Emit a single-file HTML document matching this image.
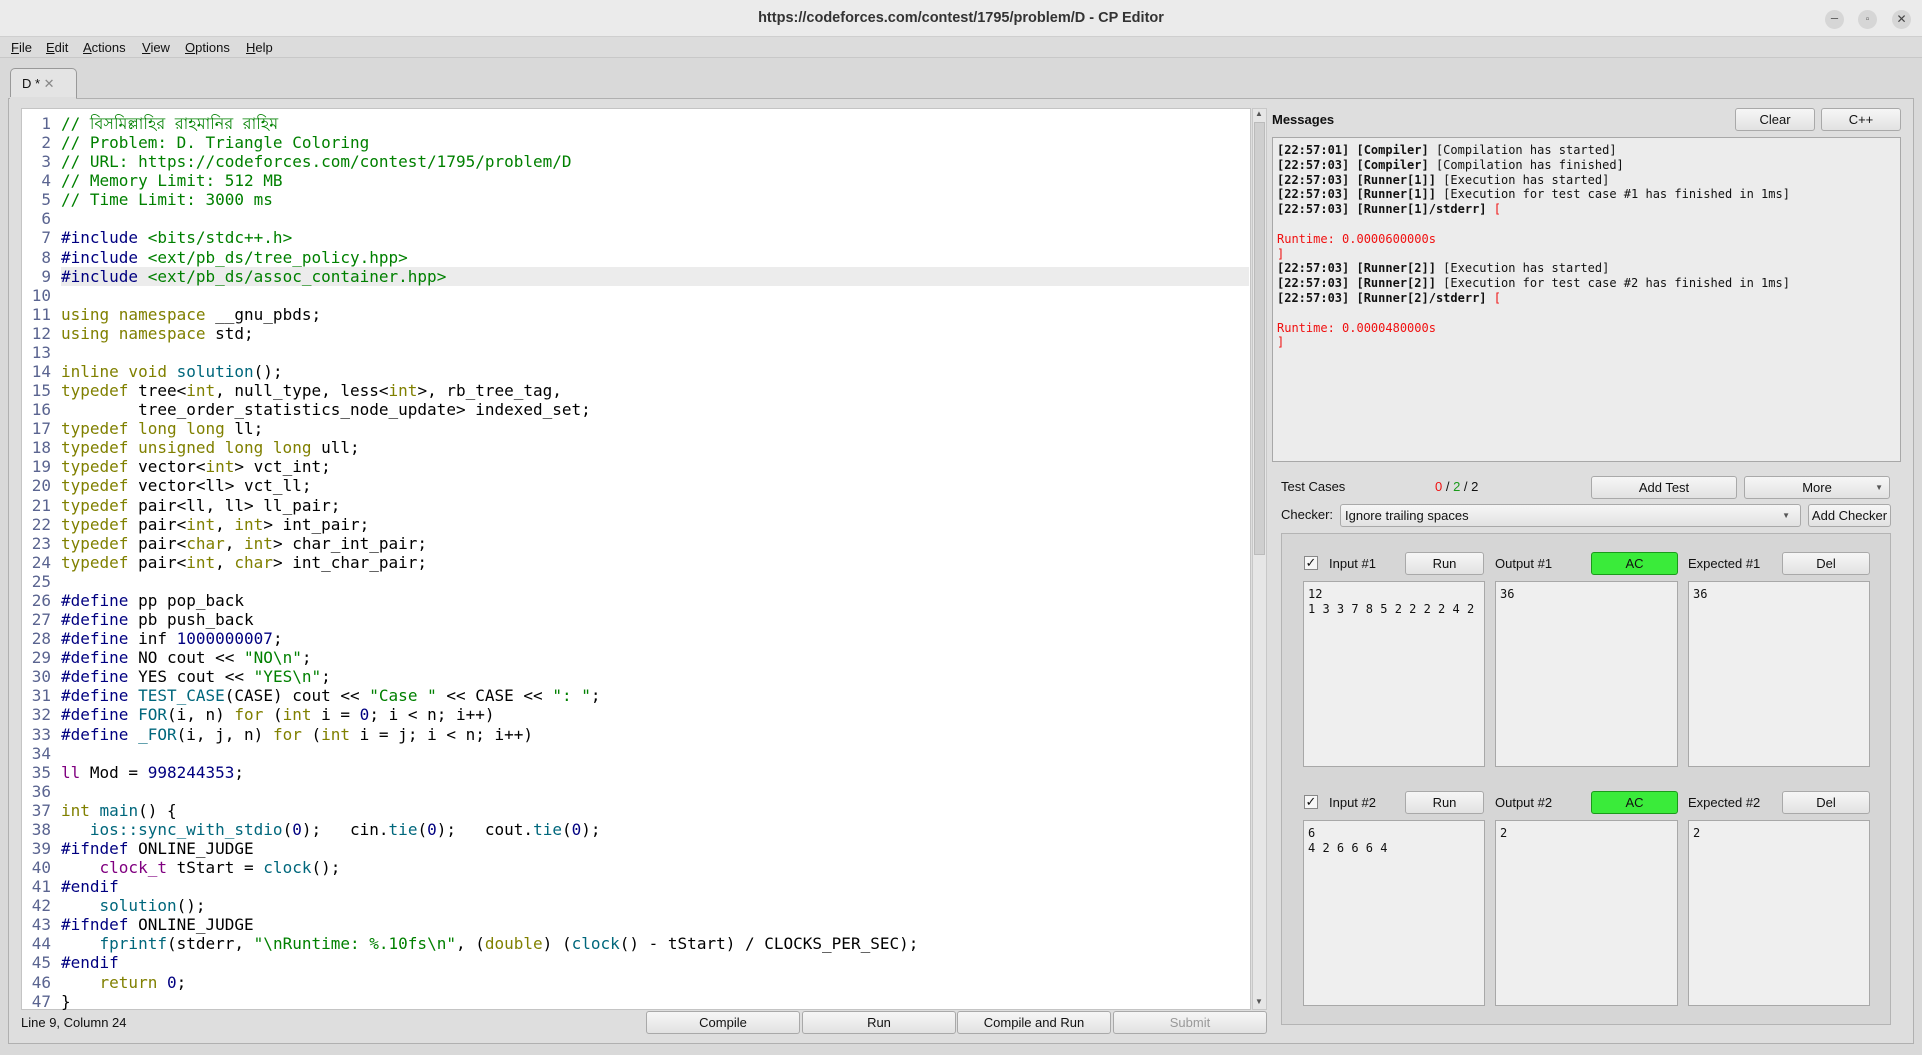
<!DOCTYPE html>
<html><head><meta charset="utf-8"><style>
*{box-sizing:border-box;margin:0;padding:0}
body{width:1922px;height:1055px;overflow:hidden;background:#d9d9d9;font-family:"Liberation Sans","DejaVu Sans",sans-serif;font-size:13px;color:#111;position:relative}
.a{position:absolute}
.btn{position:absolute;border:1px solid #a9a9a9;border-radius:3px;background:linear-gradient(#f6f6f6,#e2e2e2);text-align:center;font-size:13px;color:#111}
.code{font-family:"DejaVu Sans Mono","Liberation Mono",monospace;font-size:16px;line-height:19.08px;white-space:pre;color:#000}
.ln{color:#5a6490;text-align:right;width:30px;position:absolute;left:21px}
.c{color:#008000}.p{color:#000080}.s{color:#008000}.k{color:#808000}.f{color:#00677c}.n{color:#000080}.m{color:#800080}
.msg{font-family:"DejaVu Sans Mono","Liberation Mono",monospace;font-size:12px;line-height:14.8px;white-space:pre;color:#111}
.msg b{font-weight:bold}.r{color:#f01010}
.box{position:absolute;background:#efefef;border:1px solid #a8a8a8;font-family:"DejaVu Sans Mono",monospace;font-size:12px;line-height:15px;padding:5px 4px;white-space:pre}
.ac{position:absolute;border:1px solid #1a9a1a;border-radius:3px;background:#3aeb3a;text-align:center}
.cb{position:absolute;width:14px;height:14px;border:1px solid #888;background:#f7f7f7;font-size:13px;line-height:12px;text-align:center;font-weight:bold}
</style></head><body>
<div class="a" style="left:0;top:0;width:1922px;height:37px;background:#ebebeb;border-bottom:1px solid #cfcfcf"></div>
<div class="a" style="left:0;top:10px;width:1922px;text-align:center;font-weight:bold;font-size:14.5px;color:#333">https://codeforces.com/contest/1795/problem/D - CP Editor</div>
<div class="a" style="left:1825px;top:10px;width:19px;height:19px;border-radius:50%;background:#d6d6d6;text-align:center;line-height:15px;color:#555">–</div>
<div class="a" style="left:1858px;top:10px;width:19px;height:19px;border-radius:50%;background:#d6d6d6;text-align:center;line-height:19px;font-size:10px;color:#555">▫</div>
<div class="a" style="left:1892px;top:10px;width:19px;height:19px;border-radius:50%;background:#d6d6d6;text-align:center;line-height:19px;font-size:12px;color:#444">✕</div>
<div class="a" style="left:0;top:37px;width:1922px;height:21px;background:#dcdcdc;border-bottom:1px solid #c8c8c8"></div>
<div class="a" style="left:11px;top:40px"><u>F</u>ile</div>
<div class="a" style="left:46px;top:40px"><u>E</u>dit</div>
<div class="a" style="left:83px;top:40px"><u>A</u>ctions</div>
<div class="a" style="left:142px;top:40px"><u>V</u>iew</div>
<div class="a" style="left:185px;top:40px"><u>O</u>ptions</div>
<div class="a" style="left:246px;top:40px"><u>H</u>elp</div>
<div class="a" style="left:10px;top:68px;width:67px;height:31px;background:#e4e4e4;border:1px solid #999;border-bottom:none;border-radius:5px 5px 0 0"></div>
<div class="a" style="left:22px;top:76px">D * <span style="color:#888;font-weight:bold">✕</span></div>
<div class="a" style="left:8px;top:98px;width:1906px;height:946px;border:1px solid #b0b0b0;background:#dedede"></div>
<div class="a" style="left:10px;top:97px;width:66px;height:3px;background:#dedede"></div>
<div class="a" style="left:21px;top:108px;width:1230px;height:902px;background:#fff;border:1px solid #c4c4c4"></div>
<div class="a" style="left:61px;top:267px;width:1188px;height:19px;background:#ececec"></div>
<div class="a" style="left:1252px;top:108px;width:15px;height:902px;background:#e6e6e6;border:1px solid #c8c8c8"></div>
<div class="a" style="left:1254px;top:122px;width:11px;height:433px;background:#cfcfcf;border:1px solid #bbb"></div>
<div class="a" style="left:1255px;top:109px;font-size:8px;color:#555">▲</div>
<div class="a" style="left:1255px;top:997px;font-size:8px;color:#555">▼</div>
<div class="a code ln" style="top:114px">1
2
3
4
5
6
7
8
9
10
11
12
13
14
15
16
17
18
19
20
21
22
23
24
25
26
27
28
29
30
31
32
33
34
35
36
37
38
39
40
41
42
43
44
45
46
47</div>
<div class="a code" style="left:61px;top:114px"><span class="c">// বিসমিল্লাহির রাহমানির রাহিম</span>
<span class="c">// Problem: D. Triangle Coloring</span>
<span class="c">// URL: https://codeforces.com/contest/1795/problem/D</span>
<span class="c">// Memory Limit: 512 MB</span>
<span class="c">// Time Limit: 3000 ms</span>

<span class="p">#include</span> <span class="s">&lt;bits/stdc++.h&gt;</span>
<span class="p">#include</span> <span class="s">&lt;ext/pb_ds/tree_policy.hpp&gt;</span>
<span class="p">#include</span> <span class="s">&lt;ext/pb_ds/assoc_container.hpp&gt;</span>

<span class="k">using namespace</span> __gnu_pbds;
<span class="k">using namespace</span> std;

<span class="k">inline void</span> <span class="f">solution</span>();
<span class="k">typedef</span> tree&lt;<span class="k">int</span>, null_type, less&lt;<span class="k">int</span>&gt;, rb_tree_tag,
        tree_order_statistics_node_update&gt; indexed_set;
<span class="k">typedef long long</span> ll;
<span class="k">typedef unsigned long long</span> ull;
<span class="k">typedef</span> vector&lt;<span class="k">int</span>&gt; vct_int;
<span class="k">typedef</span> vector&lt;ll&gt; vct_ll;
<span class="k">typedef</span> pair&lt;ll, ll&gt; ll_pair;
<span class="k">typedef</span> pair&lt;<span class="k">int</span>, <span class="k">int</span>&gt; int_pair;
<span class="k">typedef</span> pair&lt;<span class="k">char</span>, <span class="k">int</span>&gt; char_int_pair;
<span class="k">typedef</span> pair&lt;<span class="k">int</span>, <span class="k">char</span>&gt; int_char_pair;

<span class="p">#define</span> pp pop_back
<span class="p">#define</span> pb push_back
<span class="p">#define</span> inf <span class="n">1000000007</span>;
<span class="p">#define</span> NO cout &lt;&lt; <span class="s">"NO\n"</span>;
<span class="p">#define</span> YES cout &lt;&lt; <span class="s">"YES\n"</span>;
<span class="p">#define</span> <span class="f">TEST_CASE</span>(CASE) cout &lt;&lt; <span class="s">"Case "</span> &lt;&lt; CASE &lt;&lt; <span class="s">": "</span>;
<span class="p">#define</span> <span class="f">FOR</span>(i, n) <span class="k">for</span> (<span class="k">int</span> i = <span class="n">0</span>; i &lt; n; i++)
<span class="p">#define</span> <span class="f">_FOR</span>(i, j, n) <span class="k">for</span> (<span class="k">int</span> i = j; i &lt; n; i++)

<span class="m">ll</span> Mod = <span class="n">998244353</span>;

<span class="k">int</span> <span class="f">main</span>() {
   <span class="f">ios::sync_with_stdio</span>(<span class="n">0</span>);   cin.<span class="f">tie</span>(<span class="n">0</span>);   cout.<span class="f">tie</span>(<span class="n">0</span>);
<span class="p">#ifndef</span> ONLINE_JUDGE
    <span class="m">clock_t</span> tStart = <span class="f">clock</span>();
<span class="p">#endif</span>
    <span class="f">solution</span>();
<span class="p">#ifndef</span> ONLINE_JUDGE
    <span class="f">fprintf</span>(stderr, <span class="s">"\nRuntime: %.10fs\n"</span>, (<span class="k">double</span>) (<span class="f">clock</span>() - tStart) / CLOCKS_PER_SEC);
<span class="p">#endif</span>
    <span class="k">return</span> <span class="n">0</span>;
}</div>
<div class="a" style="left:21px;top:1015px">Line 9, Column 24</div>
<div class="btn" style="left:646px;top:1011px;width:154px;height:23px;line-height:21px">Compile</div>
<div class="btn" style="left:802px;top:1011px;width:154px;height:23px;line-height:21px">Run</div>
<div class="btn" style="left:957px;top:1011px;width:154px;height:23px;line-height:21px">Compile and Run</div>
<div class="btn" style="left:1113px;top:1011px;width:154px;height:23px;line-height:21px;color:#999">Submit</div>
<div class="a" style="left:1272px;top:112px;font-weight:bold">Messages</div>
<div class="btn" style="left:1735px;top:108px;width:80px;height:23px;line-height:21px">Clear</div>
<div class="btn" style="left:1821px;top:108px;width:80px;height:23px;line-height:21px">C++</div>
<div class="a" style="left:1272px;top:137px;width:629px;height:325px;background:#ececec;border:1px solid #a8a8a8"></div>
<div class="a msg" style="left:1277px;top:143px"><b>[22:57:01] [Compiler]</b> [Compilation has started]
<b>[22:57:03] [Compiler]</b> [Compilation has finished]
<b>[22:57:03] [Runner[1]]</b> [Execution has started]
<b>[22:57:03] [Runner[1]]</b> [Execution for test case #1 has finished in 1ms]
<b>[22:57:03] [Runner[1]/stderr]</b> <span class="r">[</span>
<span class="r">
Runtime: 0.0000600000s
]</span>
<b>[22:57:03] [Runner[2]]</b> [Execution has started]
<b>[22:57:03] [Runner[2]]</b> [Execution for test case #2 has finished in 1ms]
<b>[22:57:03] [Runner[2]/stderr]</b> <span class="r">[</span>
<span class="r">
Runtime: 0.0000480000s
]</span></div>
<div class="a" style="left:1281px;top:479px">Test Cases</div>
<div class="a" style="left:1435px;top:479px"><span style="color:#f01010">0</span> / <span style="color:#1a9a1a">2</span> / 2</div>
<div class="btn" style="left:1591px;top:476px;width:146px;height:23px;line-height:21px">Add Test</div>
<div class="btn" style="left:1744px;top:476px;width:146px;height:23px;line-height:21px">More<span style="position:absolute;right:6px;font-size:8px;color:#555">▼</span></div>
<div class="a" style="left:1281px;top:507px">Checker:</div>
<div class="btn" style="left:1340px;top:504px;width:461px;height:23px;line-height:21px;text-align:left;padding-left:4px">Ignore trailing spaces<span style="position:absolute;right:10px;font-size:8px;color:#555">▼</span></div>
<div class="btn" style="left:1808px;top:504px;width:83px;height:23px;line-height:21px">Add Checker</div>
<div class="a" style="left:1281px;top:533px;width:610px;height:492px;border:1px solid #b4b4b4;background:#d6d6d6"></div>
<div class="cb" style="left:1304px;top:556px">✓</div>
<div class="a" style="left:1329px;top:556px">Input #1</div>
<div class="btn" style="left:1405px;top:552px;width:79px;height:23px;line-height:21px">Run</div>
<div class="a" style="left:1495px;top:556px">Output #1</div>
<div class="ac" style="left:1591px;top:552px;width:87px;height:23px;line-height:21px">AC</div>
<div class="a" style="left:1688px;top:556px">Expected #1</div>
<div class="btn" style="left:1782px;top:552px;width:88px;height:23px;line-height:21px">Del</div>
<div class="box" style="left:1303px;top:581px;width:182px;height:186px">12
1 3 3 7 8 5 2 2 2 2 4 2</div>
<div class="box" style="left:1495px;top:581px;width:183px;height:186px">36</div>
<div class="box" style="left:1688px;top:581px;width:182px;height:186px">36</div>
<div class="cb" style="left:1304px;top:795px">✓</div>
<div class="a" style="left:1329px;top:795px">Input #2</div>
<div class="btn" style="left:1405px;top:791px;width:79px;height:23px;line-height:21px">Run</div>
<div class="a" style="left:1495px;top:795px">Output #2</div>
<div class="ac" style="left:1591px;top:791px;width:87px;height:23px;line-height:21px">AC</div>
<div class="a" style="left:1688px;top:795px">Expected #2</div>
<div class="btn" style="left:1782px;top:791px;width:88px;height:23px;line-height:21px">Del</div>
<div class="box" style="left:1303px;top:820px;width:182px;height:186px">6
4 2 6 6 6 4</div>
<div class="box" style="left:1495px;top:820px;width:183px;height:186px">2</div>
<div class="box" style="left:1688px;top:820px;width:182px;height:186px">2</div>
</body></html>
